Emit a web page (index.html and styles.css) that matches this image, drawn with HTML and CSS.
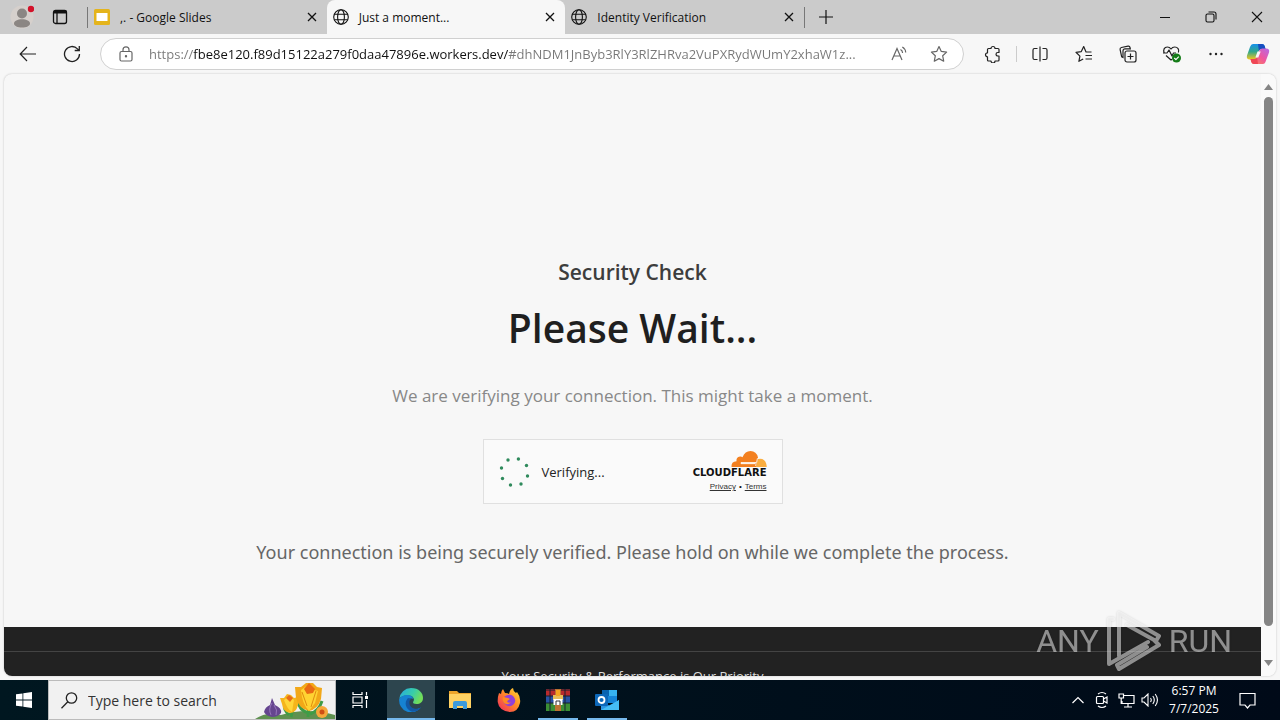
FILE: index.html
```html
<!DOCTYPE html>
<html lang="en">
<head>
<meta charset="utf-8">
<meta name="viewport" content="width=device-width, initial-scale=1">
<title>Just a moment...</title>
<link rel="stylesheet" href="styles.css">
</head>
<body>
<svg class="defs" aria-hidden="true">
  <symbol id="globe" viewBox="0 0 16 16"><g fill="none" stroke="currentColor" stroke-width="1.1"><circle cx="8" cy="8" r="7.3"/><ellipse cx="8" cy="8" rx="3.4" ry="7.3"/><path d="M1.3 5.3h13.4M1.3 10.7h13.4"/></g></symbol>
  <symbol id="close" viewBox="0 0 10 10"><path d="M1 1l8 8M9 1l-8 8" fill="none" stroke="currentColor" stroke-width="1.3"/></symbol>
</svg>

<header class="tabstrip">
  <button class="profile" aria-label="Profile">
    <svg width="24" height="24" viewBox="0 0 24 24"><circle cx="12" cy="12" r="11.5" fill="#d6d0cc"/><circle cx="12" cy="8.500" r="5" fill="#8b8683"/><path d="M4 18.500c0-2.500 3.500-4.200 8-4.200s8 1.700 8 4.200-3.500 4-8 4-8-1.500-8-4z" fill="#8b8683"/><circle cx="21" cy="4" r="3.200" fill="#d3122a"/></svg>
  </button>
  <button class="workspace" aria-label="Tab actions">
    <svg width="16" height="16" viewBox="0 0 16 16" fill="none" stroke="#111" stroke-width="1.300"><rect x="1.500" y="1.500" width="13" height="13" rx="2"/><path d="M1.500 3h13" stroke-width="3"/><path d="M5 4v10"/></svg>
  </button>
  <nav class="tabs" aria-label="Tabs">
    <div class="tab tab-first">
      <button class="tab-title"><svg width="16" height="16" viewBox="0 0 16 16"><rect width="16" height="16" rx="1.500" fill="#e4b41c"/><rect x="2.500" y="4" width="11" height="8" fill="#fff"/></svg><span>,. - Google Slides</span></button>
      <button class="tab-close" aria-label="Close Google Slides"><svg width="10" height="10"><use href="#close"/></svg></button>
    </div>
    <div class="tab active">
      <button class="tab-title"><svg width="16" height="16"><use href="#globe"/></svg><span>Just a moment...</span></button>
      <button class="tab-close" aria-label="Close Just a moment"><svg width="10" height="10"><use href="#close"/></svg></button>
    </div>
    <div class="tab tab-last">
      <button class="tab-title"><svg width="16" height="16"><use href="#globe"/></svg><span>Identity Verification</span></button>
      <button class="tab-close" aria-label="Close Identity Verification"><svg width="10" height="10"><use href="#close"/></svg></button>
    </div>
  </nav>
  <button class="new-tab" aria-label="New tab"><svg width="14" height="14" viewBox="0 0 14 14" stroke="#111" stroke-width="1.200"><path d="M7 0v14M0 7h14"/></svg></button>
  <div class="window-controls">
    <button aria-label="Minimize"><svg width="12" height="12" viewBox="0 0 12 12" stroke="#111"><path d="M1 6.500h10"/></svg></button>
    <button aria-label="Restore"><svg width="12" height="12" viewBox="0 0 12 12" fill="none" stroke="#111" stroke-width="1.100"><rect x="1" y="3" width="8" height="8" rx="1.500"/><path d="M3.500 1H9q2 0 2 2v5.500"/></svg></button>
    <button aria-label="Close window"><svg width="12" height="12" viewBox="0 0 12 12" stroke="#111" stroke-width="1.100"><path d="M1 1l10 10M11 1L1 11"/></svg></button>
  </div>
</header>

<div class="toolbar">
  <button class="tool" aria-label="Back"><svg width="18" height="16" viewBox="0 0 18 16" fill="none" stroke="#222" stroke-width="1.200"><path d="M17 8H1.500M8 1L1.200 8 8 15"/></svg></button>
  <button class="tool" aria-label="Refresh"><svg width="18" height="18" viewBox="0 0 18 18" fill="none" stroke="#222" stroke-width="1.300"><path d="M16.500 9A7.500 7.500 0 1 1 14.500 3.900L16 5.400M16.300 1v4.500h-4.600"/></svg></button>
  <form class="address">
    <svg width="14" height="16" viewBox="0 0 14 16" fill="none" stroke="#666" stroke-width="1.200"><rect x="1" y="5.500" width="12" height="9.500" rx="1.500"/><path d="M4 5.500V3.800a3 3 0 0 1 6 0v1.700"/><circle cx="7" cy="10.200" r=".6" fill="#666"/></svg>
    <input class="url" type="text" aria-label="Address" value="https://fbe8e120.f89d15122a279f0daa47896e.workers.dev/#dhNDM1JnByb3RlY3RlZHRva2VuPXRydWUmY2xhaW1z...">
    <button type="button" aria-label="Read aloud"><svg width="17" height="16" viewBox="0 0 17 16" fill="none" stroke="#666" stroke-width="1.200"><path d="M1 14L6 2.500 11 14M2.800 10h6.500M9.500 3.500q2 1 2.100 3.500M11.300 1q3.200 1.800 3.400 5.500"/></svg></button>
    <button type="button" aria-label="Add to favorites"><svg width="18" height="18" viewBox="0 0 18 18" fill="none" stroke="#666" stroke-width="1.200" stroke-linejoin="round"><path d="M9 1.500l2.300 4.900 5.300.7-3.900 3.700 1 5.400L9 13.600l-4.700 2.600 1-5.400L1.400 7.100l5.300-.7z"/></svg></button>
  </form>
  <div class="tools">
    <button class="tool" aria-label="Extensions"><svg width="18" height="18" viewBox="0 0 18 18" fill="none" stroke="#222" stroke-width="1.200" stroke-linejoin="round"><path d="M3.500 4.500a1 1 0 0 1 1-1H7a2 2 0 0 1 4 0h3a1 1 0 0 1 1 1V7.500h-1.200a1.700 1.700 0 0 0 0 3.500H15v4a1 1 0 0 1-1 1h-3a2 2 0 0 1-4 0H4.500a1 1 0 0 1-1-1v-3.200a2 2 0 0 1 0-4z"/></svg></button>
    <span class="tool-divider"></span>
    <button class="tool" aria-label="Split screen"><svg width="18" height="18" viewBox="0 0 18 18" fill="none" stroke="#222" stroke-width="1.200"><path d="M6.500 3.500h-3A1.500 1.500 0 0 0 2 5v8a1.500 1.500 0 0 0 1.500 1.500h3M11.500 3.500h3A1.500 1.500 0 0 1 16 5v8a1.500 1.500 0 0 1-1.500 1.500h-3M9 1.500v15"/></svg></button>
    <button class="tool" aria-label="Favorites"><svg width="18" height="18" viewBox="0 0 18 18" fill="none" stroke="#222" stroke-width="1.200" stroke-linejoin="round"><path d="M16.500 7H11L8.700 1.500 6.300 6.600 1 7.300l3.900 3.800-1 5.200L8.200 14M10.500 10.500h6.500M10.500 14h6.500"/></svg></button>
    <button class="tool" aria-label="Collections"><svg width="18" height="18" viewBox="0 0 18 18" fill="none" stroke="#222" stroke-width="1.200"><rect x="6" y="6" width="11" height="11" rx="2"/><path d="M11.500 8.500v6M8.500 11.500h6M4 12.500l-1.300-.6L1.100 4.500a1.700 1.700 0 0 1 1.300-2L9 1.200a1.700 1.700 0 0 1 2 1.300l.3 1.400H6a2 2 0 0 0-2 2z"/></svg></button>
    <button class="tool" aria-label="Browser essentials"><svg width="20" height="18" viewBox="0 0 20 18" fill="none" stroke="#222" stroke-width="1.200" stroke-linejoin="round"><path d="M2.300 8C.8 5 2.300 2 5.300 2 7 2 8.300 3 9 4c.7-1 2-2 3.700-2 3 0 4.800 2.500 3.700 5.500M4 10.500L9 15l1-.8M1 8h4l2-3 3 6 1.500-3H14"/><circle cx="14.500" cy="13" r="4.500" fill="#147c18" stroke="none"/><path d="M12.300 13l1.600 1.600 2.900-3" stroke="#fff"/></svg></button>
    <button class="tool" aria-label="Settings and more"><svg width="18" height="18" viewBox="0 0 18 18" fill="#222"><circle cx="3.500" cy="9" r="1.200"/><circle cx="9" cy="9" r="1.200"/><circle cx="14.500" cy="9" r="1.200"/></svg></button>
    <button class="tool" aria-label="Copilot"><svg width="24" height="22" viewBox="0 0 24 22">
      <defs><linearGradient id="ca" x1="0" y1="0" x2="0" y2="1"><stop offset="0" stop-color="#1791ec"/><stop offset=".5" stop-color="#32a88a"/><stop offset="1" stop-color="#f4c71e"/></linearGradient><linearGradient id="cb" x1="1" y1="0" x2="0" y2="1"><stop offset="0" stop-color="#b46be8"/><stop offset=".5" stop-color="#f1569c"/><stop offset="1" stop-color="#fb9045"/></linearGradient></defs>
      <path d="M7 1h9q2 0 2.700 2l.8 3h-4q-2 0-2.600 2l-2 6q-.8 2.500-3 2.500H4q-4 0-3-4L4 4q1-3 3-3z" fill="url(#ca)"/>
      <path d="M12 1h4q2 0 2.700 2l.8 3h-4q-2 0-2.600 2z" fill="#174ec0"/>
      <path d="M17 21H8q-2 0-2.700-2l-.8-3h4q2 0 2.600-2l2-6q.8-2.500 3-2.500H20q4 0 3 4l-3 8q-1 3.500-3 3.500z" fill="url(#cb)"/><path d="M12 21H8q-2 0-2.700-2l-.8-3h4q2 0 2.600-2z" fill="#ef4656"/><path d="M11.500 8.500h3.200l-2.400 6H9.400z" fill="#f7f7f7"/></svg></button>
  </div>
</div>

<div class="viewport">
  <div class="page">
    <main class="check">
      <h2>Security Check</h2>
      <h1>Please Wait...</h1>
      <p class="lead">We are verifying your connection. This might take a moment.</p>
      <section class="widget">
        <svg class="spinner" width="32" height="32" viewBox="0 0 32 32" fill="#2f8a5c"><circle cx="19.400" cy="3" r="1.700"/><circle cx="27.500" cy="9.500" r="1.700"/><circle cx="28.500" cy="20" r="1.700"/><circle cx="22" cy="28" r="1.700"/><circle cx="11.500" cy="29" r="1.700"/><circle cx="3.500" cy="22.500" r="1.700"/><circle cx="2.500" cy="12" r="1.700"/><circle cx="9" cy="4" r="1.700"/></svg>
        <span class="status">Verifying...</span>
        <div class="brand">
          <svg width="36" height="16" viewBox="0 0 36 16"><path d="M.5 16q-.5-5.500 5-5.800Q5 6 9 5.500q1.500-.2 2.500.7Q14 0 19.500 0q6 0 7.500 6.500L25.500 16z" fill="#f38020"/><path d="M25 16l2-8q8-1.500 8.800 8z" fill="#faae40"/><path d="M10 11.500h15l-1 1.200H10zM26.500 7l-2 8" fill="#fff" stroke="#fff" stroke-width=".7"/></svg>
          <span class="wordmark">CLOUDFLARE</span>
          <div class="links"><a href="#privacy">Privacy</a><span>•</span><a href="#terms">Terms</a></div>
        </div>
      </section>
      <p class="note">Your connection is being securely verified. Please hold on while we complete the process.</p>
    </main>
    <footer class="footer"><p>Your Security &amp; Performance is Our Priority</p></footer>
  </div>
  <div class="scrollbar">
    <svg width="9" height="6" viewBox="0 0 9 6" fill="#858585"><path d="M0 6L4.500 0 9 6z"/></svg>
    <span class="thumb"></span>
    <svg width="9" height="6" viewBox="0 0 9 6" fill="#858585"><path d="M0 0h9L4.500 6z"/></svg>
  </div>
  <div class="watermark" aria-hidden="true">
    <span>ANY</span>
    <svg width="58" height="64" viewBox="0 0 58 64" fill="none" stroke="currentColor" stroke-width="4" stroke-linejoin="round" stroke-linecap="round"><path d="M14 47V4l40 23-3 5-29-16M8 10H4v45l39-22M14 60l40-24-5-5M14 60l-2-4 30-18"/></svg>
    <span>RUN</span>
  </div>
</div>

<footer class="taskbar">
  <button class="start" aria-label="Start"><svg width="16" height="16" viewBox="0 0 16 16" fill="#fff"><path d="M0 2.300l6.500-.9v6.200H0zM7.300 1.200L16 0v7.600H7.300zM0 8.400h6.500v6.200L0 13.700zM7.300 8.400H16V16l-8.700-1.200z"/></svg></button>
  <label class="search">
    <svg width="17" height="17" viewBox="0 0 17 17" fill="none" stroke="#222" stroke-width="1.300"><circle cx="10.500" cy="6" r="5.200"/><path d="M6.800 9.700L.5 16.200"/></svg>
    <input type="text" placeholder="Type here to search" aria-label="Type here to search">
    <svg class="flowers" width="80" height="38" viewBox="0 0 80 38">
      <path d="M0 38q12-8 26-4 26-8 54 0v4z" fill="#5f9150"/>
      <path d="M34 34q-6-6-4-10M36 36q2-6 2-12M53 36l1-16M54 32q-10-2-12-14M55 33q9-3 12-13" stroke="#3f9c46" stroke-width="3" fill="none"/>
      <path d="M17 17l3 7q7 3 6 8-3 4-9 4-6-1-8-5 1-5 6-7z" fill="#65458f"/><path d="M17 22q-4 6-1 12M19 24q4 5 2 10" stroke="#9575ba" fill="none"/>
      <path d="M25 17l4 0 3-4 4 1 3 3 4-1 0 8q-2 8-8 8-7-1-8-9z" fill="#f5b51c"/><path d="M29 19l5-4 5 4-2 12q-5-3-8-12z" fill="#ffd63a"/><path d="M31 17l3-3 4 3-3 4z" fill="#e96c16"/>
      <path d="M40 6l6 0 5-4 7 0 4 4 5 1-1 11q-3 10-12 12-10-2-13-13z" fill="#f2a818"/><path d="M46 9l7-5 6 5 4 1-3 12-6 8q-7-7-8-21z" fill="#ffd332"/><path d="M49 8l5-6 6 6-2 4-6 1z" fill="#e96b13"/><path d="M47 11l5 14M61 10l-5 16" stroke="#df8c0f" fill="none"/>
      <circle cx="67" cy="31" r="6" fill="#f5a83b"/><circle cx="67" cy="31" r="2.500" fill="#cf4e15"/>
    </svg>
  </label>
  <nav class="apps" aria-label="Pinned apps">
    <button class="task-view" aria-label="Task view"><svg width="18" height="18" viewBox="0 0 18 18" fill="none" stroke="#fff" stroke-width="1.200"><path d="M2 1v2.500h9V1M2 17v-2.500h9V17M2 6h9v6H2zM15.500 1v3.500M15.500 9v8"/><path d="M14 5h3v3h-3z" fill="#fff" stroke="none"/></svg></button>
    <button class="current" aria-label="Microsoft Edge"><svg width="24" height="24" viewBox="0 0 24 24">
      <defs><linearGradient id="ea" x1="0" y1="0" x2="1" y2=".4"><stop offset="0" stop-color="#25a9e4"/><stop offset=".6" stop-color="#38cda9"/><stop offset="1" stop-color="#72de59"/></linearGradient></defs>
      <path d="M.3 11A12 12 0 0 1 12 0c8 0 12 5 12 10 0 4-3 6-6.500 6-2.500 0-3.800-1-3.400-2 2.400-3-.5-6.500-4.100-6.500C5 7 1.500 8.500.3 11z" fill="url(#ea)"/>
      <path d="M.2 11C1.500 8.300 5 6.500 9.500 7c2.500.3 4.500 2 4.800 4-5-2-8 2.500-5 7 2.500 3.700 8 4.400 12.500 1.500A12 12 0 0 1 .2 11z" fill="#1683d2"/>
      <path d="M9 10c-4 4-3 11 4 13.700 4 .2 7-1.700 9-4.300-6 3-11 0-11.500-3.500C10 13 11 11.500 12.500 11z" fill="#1358a3"/></svg></button>
    <button aria-label="File Explorer"><svg width="22" height="20" viewBox="0 0 22 20"><path d="M0 1h8l2 2h12v3H0z" fill="#eda52b"/><path d="M0 4h22v14H0z" fill="#ffd263"/><path d="M4 19v-6q0-2 2-2h10q2 0 2 2v6h-4v-3H8v3z" fill="#3c9bdc"/></svg></button>
    <button aria-label="Firefox"><svg width="24" height="24" viewBox="0 0 24 24">
      <defs><linearGradient id="fa" x1="1" y1="0" x2="0" y2="1"><stop offset="0" stop-color="#ffe03a"/><stop offset=".45" stop-color="#ff8b25"/><stop offset="1" stop-color="#ef2363"/></linearGradient></defs>
      <path d="M2 5l2 1q0-3 2-5l2 4q3 0 4 1 1-5 4-6 0 3 3 5l1-1q4 5 3 11-2 9-10 9Q2 23 .7 14 .5 9 2 5z" fill="url(#fa)"/><path d="M7 9q5-4 9-1 4 4 1 8-4 4-8 1-3-2-3-5l4 1 2-2q-3 0-5-2z" fill="#9040d8"/><path d="M6 9l5 1 2 1-3 2q1 3 4 1-3 4-7 1-2-3-1-6z" fill="#ff8a22"/></svg></button>
    <button class="open" aria-label="WinRAR"><svg width="24" height="22" viewBox="0 0 24 22"><path d="M0 0h24v7H0z" fill="#b82a2d"/><path d="M0 7h24v7H0z" fill="#2852a3"/><path d="M0 14h24v8H0z" fill="#3b8e35"/><path d="M0 7h24M0 14h24M0 1h24M4 0v22M19 0v22" stroke="#171f30" stroke-width="1"/><path d="M9 0h6v22H9z" fill="#bd7233"/><path d="M7 6h10v5H7z" fill="#e7bd59"/><path d="M7.500 10h9v6h-9z" fill="#fff"/><path d="M10 16v-4h4v4" stroke="#333" fill="none"/><path d="M10 1h4v6h-4z" fill="#f5a420"/></svg></button>
    <button class="open" aria-label="Outlook"><svg width="24" height="22" viewBox="0 0 24 22"><path d="M7 1h15v13H7z" fill="#1684d6"/><path d="M7 1h7v6H7z" fill="#0863b0"/><path d="M14 1h8v6h-8z" fill="#37b2ef"/><path d="M6 12l9 5 9-6v10H6z" fill="#2b94e2"/><path d="M6 21l18-10v10z" fill="#45bdf4"/><rect y="5" width="13" height="12" rx="1" fill="#0d68b9"/><circle cx="6.500" cy="11" r="3" stroke="#fff" stroke-width="1.800" fill="none"/></svg></button>
  </nav>
  <div class="tray">
    <button aria-label="Show hidden icons"><svg width="12" height="8" viewBox="0 0 12 8" fill="none" stroke="#fff" stroke-width="1.200"><path d="M.5 7L6 1.500 11.500 7"/></svg></button>
    <button aria-label="Meet now"><svg width="14" height="18" viewBox="0 0 14 18" fill="none" stroke="#fff" stroke-width="1.200"><rect x="1.500" y="5.500" width="7" height="7" rx="1"/><path d="M8.500 8l3.500-2v6l-3.500-2M3 3q4-3 8 0M3 15q4 3 8 0"/></svg></button>
    <button aria-label="Network"><svg width="17" height="15" viewBox="0 0 17 15" fill="none" stroke="#fff" stroke-width="1.200"><path d="M6 2.500h10v8H4V8M10 10.500V14M6 14h8M1 1h4.500v4H1zM3.200 5v6"/></svg></button>
    <button aria-label="Volume"><svg width="18" height="14" viewBox="0 0 18 14" fill="none" stroke="#fff" stroke-width="1.100"><path d="M1 5h2l4-4v12L3 9H1zM9.500 5q1.500 2 0 4M11.800 3q3 4 0 8M14.200 1q4.500 6 0 12"/></svg></button>
    <time class="clock"><span>6:57 PM</span><span>7/7/2025</span></time>
    <button class="notices" aria-label="Notifications"><svg width="17" height="17" viewBox="0 0 17 17" fill="none" stroke="#fff" stroke-width="1.200"><path d="M1 1.500h15V13h-5l-2.500 3L6 13H1z"/></svg></button>
  </div>
</footer>
</body>
</html>
```

FILE: styles.css
```css
* { box-sizing: border-box; }

body {
  display: flex;
  flex-direction: column;
  height: 100vh;
  margin: 0;
  overflow: hidden;
  background: #f7f7f7;
  color: #111;
  font-family: "Open Sans", "Noto Sans", sans-serif;
  font-size: 12px;
}

button {
  display: flex;
  align-items: center;
  justify-content: center;
  padding: 0;
  border: 0;
  background: none;
  color: inherit;
  font: inherit;
}

svg { display: block; flex: none; }
h1, h2, p { margin: 0; }
input { min-width: 0; border: 0; outline: 0; background: none; font: inherit; }
.defs { position: absolute; width: 0; height: 0; }

.tabstrip { display: flex; flex: none; height: 34px; background: #cbcbcb; }
.profile { width: 44px; }
.workspace { width: 32px; }
.tabs { display: flex; flex: 0 1 718px; min-width: 0; margin-left: 11px; }
.tab { display: flex; flex: 1; min-width: 0; align-items: center; padding: 0 10px 0 6px; }
.tab-first { border-left: 1px solid transparent; border-image: linear-gradient(transparent 8px, #777 8px 27px, transparent 27px) 1; }
.tab-last { border-right: 1px solid transparent; border-image: linear-gradient(transparent 8px, #777 8px 27px, transparent 27px) 1; }
.tab.active { border-radius: 8px 8px 0 0; background: #f7f7f7; }
.tab-title { flex: 1; justify-content: flex-start; gap: 10px; min-width: 0; white-space: nowrap; }
.tab-close { width: 10px; height: 20px; }
.new-tab { width: 42px; }
.window-controls { display: flex; margin-left: auto; }
.window-controls button { width: 46px; }

.toolbar { display: flex; flex: none; align-items: center; height: 39px; padding: 0 2px 0 6px; }
.tool { width: 44px; height: 32px; }
.address {
  display: flex;
  flex: 1;
  align-items: center;
  min-width: 0;
  height: 32px;
  margin-left: 6px;
  padding: 0 15px 0 18px;
  border: 1px solid #d0d0d0;
  border-radius: 16px;
  background: #fff;
}
.address button { width: 39px; }
.address button:last-child { width: 18px; margin-left: 11px; }
.url {
  flex: 1;
  margin-left: 16px;
  padding: 0;
  background: linear-gradient(to right, #777 44px, #111 44px 359px, #777 359px);
  background-clip: text;
  -webkit-background-clip: text;
  -webkit-text-fill-color: transparent;
  font-size: 13px;
  line-height: 20px;
}
.tools { display: flex; align-items: center; margin-left: 7px; }
.tool-divider { width: 1px; height: 16px; margin: 0 1px; background: #ccc; }
.tools .tool:last-child { width: 40px; }

.viewport {
  position: relative;
  display: flex;
  flex: 1;
  min-height: 0;
  margin: 1px 4px 4px;
  overflow: hidden;
  border-radius: 8px;
  box-shadow: 0 0 2px #bbb;
}
.page { display: flex; flex: 1; flex-direction: column; min-width: 0; overflow: hidden; }
.check {
  display: flex;
  flex: none;
  flex-direction: column;
  align-items: center;
  padding: 180px 24px 59px;
  text-align: center;
}
h2 { color: #3d3d3d; font-size: 21px; font-weight: 600; line-height: 36px; }
h1 { margin-top: 6px; color: #1f1f1f; font-size: 39px; font-weight: 600; line-height: 64px; }
.lead { margin-top: 21px; color: #888; font-size: 17px; line-height: 30px; }
.widget {
  display: flex;
  align-items: center;
  width: 300px;
  height: 65px;
  margin-top: 28px;
  padding: 0 15px;
  border: 1px solid #e0e0e0;
  background: #fafafa;
}
.status { margin-left: 11px; color: #232323; font-size: 13px; }
.brand { display: flex; flex-direction: column; align-items: flex-end; margin-left: auto; }
.wordmark { color: #111; font-family: "DejaVu Sans", sans-serif; font-size: 10px; font-weight: 700; line-height: 12px; }
.links { display: flex; gap: 3px; margin-top: 3px; font-family: "Liberation Sans", sans-serif; font-size: 8px; line-height: 10px; }
.links a { color: #333; }
.note { margin-top: 32px; color: #666; font-family: "Noto Sans", sans-serif; font-size: 18px; line-height: 32px; }
.footer { flex: none; padding-top: 24px; background: #222; color: #ddd; font-size: 13px; text-align: center; }
.footer p { padding: 12px; border-top: 1px solid #444; line-height: 24px; }

.scrollbar {
  display: flex;
  flex: none;
  flex-direction: column;
  align-items: center;
  gap: 7px;
  width: 15px;
  padding: 10px 0;
  background: #fafafa;
}
.thumb { flex: 0 1 529px; width: 9px; margin-bottom: auto; border-radius: 5px; background: #858585; }
.watermark {
  position: absolute;
  right: 44px;
  bottom: 3px;
  display: flex;
  align-items: center;
  gap: 6px;
  color: #ffffff80;
  filter: drop-shadow(0 0 1px #0004);
  font-family: Roboto, "Liberation Sans", sans-serif;
  font-size: 32px;
  pointer-events: none;
}

.taskbar { display: flex; flex: none; height: 40px; background: linear-gradient(to right, #001720, #000a18); color: #fff; }
.start { width: 48px; }
.search { display: flex; align-items: center; width: 288px; padding-left: 12px; border: 1px solid #bbb; background: #f1f1f1; }
.search input { flex: 1; margin-left: 10px; padding: 0; color: #222; font-size: 14px; }
.search input::placeholder { color: #333; opacity: 1; }
.flowers { margin-left: auto; }
.apps { display: flex; gap: 1px; }
.apps button { width: 48px; }
.apps .task-view { margin-right: 2px; }
.apps .current { background: linear-gradient(#76b9ed, #76b9ed) bottom / 100% 2px no-repeat #2d454e; }
.apps .open { background: linear-gradient(#76b9ed, #76b9ed) bottom / 40px 2px no-repeat; }
.tray { display: flex; align-items: center; margin-left: auto; }
.tray button { width: 24px; height: 40px; }
.clock { display: flex; flex-direction: column; width: 64px; align-items: center; line-height: 18px; }
.tray .notices { width: 42px; margin-right: 12px; }
```
